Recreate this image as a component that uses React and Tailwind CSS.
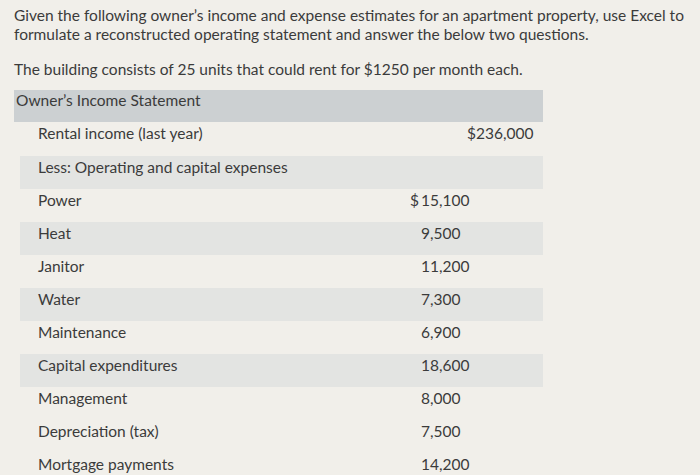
import React from 'react';

const rows = [
  { label: 'Rental income (last year)', total: '$236,000', h: 'h-[34px]' },
  { label: 'Less: Operating and capital expenses', shaded: true },
  { label: 'Power', sign: '$', value: '15,100' },
  { label: 'Heat', value: '9,500', shaded: true },
  { label: 'Janitor', value: '11,200' },
  { label: 'Water', value: '7,300', shaded: true },
  { label: 'Maintenance', value: '6,900' },
  { label: 'Capital expenditures', value: '18,600', shaded: true },
  { label: 'Management', value: '8,000' },
  { label: 'Depreciation (tax)', value: '7,500' },
  { label: 'Mortgage payments', value: '14,200' },
];

const App = () => {
  return (
    <div
      className="w-[700px] h-[475px] overflow-hidden bg-[#f1efea] text-[#3b3b3b] flex flex-col"
      style={{ fontFamily: 'Lato, "Open Sans", sans-serif' }}
    >
      <div className="pl-[14px] pt-[6px] pr-2 text-[15.5px] leading-[19px]">
        <p>
          Given the following owner’s income and expense estimates for an apartment property, use Excel to
          formulate a reconstructed operating statement and answer the below two questions.
        </p>
        <p className="mt-[16px]">The building consists of 25 units that could rent for $1250 per month each.</p>
      </div>

      <div className="ml-[14px] mt-[11px] w-[529px] text-[15.5px]">
        <div className="h-[32px] bg-[#ccd0d2] pl-[2px] leading-[20px]">Owner’s Income Statement</div>
        {rows.map((r) => (
          <div
            key={r.label}
            className={`${r.h || 'h-[33px]'} flex leading-[22px] ${r.shaded ? 'ml-[6px] bg-[#e3e4e2]' : ''}`}
          >
            <div className={`${r.shaded ? 'pl-[18px] w-[390px]' : 'pl-[24px] w-[396px]'} shrink-0`}>
              {r.label}
            </div>
            <div className="w-[11px] shrink-0">{r.sign}</div>
            <div className="w-[46px] shrink-0 whitespace-nowrap">{r.value}</div>
            <div className="flex-1">{r.total}</div>
          </div>
        ))}
      </div>
      <div className="mt-auto h-[3px] bg-[#b9b8b4]" />
    </div>
  );
};

export default App;
